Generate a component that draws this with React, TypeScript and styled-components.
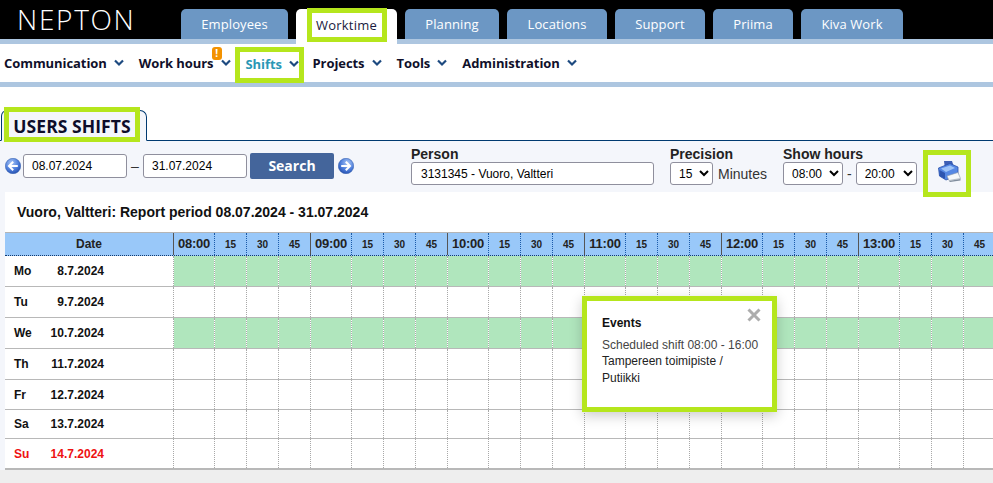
import { FC } from 'react'
import styled, { createGlobalStyle } from 'styled-components'

const HOURS = ['08:00', '09:00', '10:00', '11:00', '12:00', '13:00']
const QUARTERS = ['15', '30', '45']
const TABS = [
  { label: 'Employees', width: 107 },
  { label: 'Worktime', width: 101 },
  { label: 'Planning', width: 94 },
  { label: 'Locations', width: 100 },
  { label: 'Support', width: 90 },
  { label: 'Priima', width: 80 },
  { label: 'Kiva Work', width: 102 },
]
const MENU = ['Communication', 'Work hours', 'Shifts', 'Projects', 'Tools', 'Administration']

const DAYS = [
  { day: 'Mo', date: '8.7.2024', shift: true, height: 31 },
  { day: 'Tu', date: '9.7.2024', shift: false, height: 31 },
  { day: 'We', date: '10.7.2024', shift: true, height: 31 },
  { day: 'Th', date: '11.7.2024', shift: false, height: 31 },
  { day: 'Fr', date: '12.7.2024', shift: false, height: 30 },
  { day: 'Sa', date: '13.7.2024', shift: false, height: 29 },
  { day: 'Su', date: '14.7.2024', shift: false, height: 31, holiday: true },
]

const Chevron: FC = () => (
  <ChevronIcon viewBox="0 0 10 8">
    <path d="M1 1.5 L5 5.5 L9 1.5" fill="none" stroke="#1d4a80" strokeWidth="2.2" />
  </ChevronIcon>
)

const RoundArrow: FC<{ flip?: boolean }> = ({ flip }) => (
  <ArrowIcon viewBox="0 0 16 16" $flip={flip}>
    <defs>
      <radialGradient id="arrowFill" cx="0.4" cy="0.3" r="0.8">
        <stop offset="0" stopColor="#a9c6f5" />
        <stop offset="0.55" stopColor="#4f7fdc" />
        <stop offset="1" stopColor="#1c46a6" />
      </radialGradient>
    </defs>
    <circle cx="8" cy="8" r="7.7" fill="url(#arrowFill)" stroke="#2c58a8" strokeWidth="0.5" />
    <path d="M8.2 3.8 L4 8 L8.2 12.2 M4.4 8 H12.8" fill="none" stroke="#fff" strokeWidth="2" />
  </ArrowIcon>
)

const PrinterIcon: FC = () => (
  <PrinterSvg viewBox="0 0 23 23">
    <path d="M6 1 H14 L16 7 L7 9 Z" fill="#3e5fb4" />
    <path d="M0.5 8 L12 3.5 L20 7 L20 15 L8 20 L1.5 16 Z" fill="#5688e4" stroke="#2b52ab" strokeWidth="0.8" />
    <path d="M3 8.5 L12 5.5 L17 8 L8 12 Z" fill="#9fc4f7" />
    <path d="M1.5 10 L7 13 L7 19 L1.5 16 Z" fill="#2d55b0" />
    <path d="M9 16 L20 12.5 L22.5 18.5 L11 20.5 Z" fill="#f6f8fa" stroke="#8d99a8" strokeWidth="0.6" />
    <path d="M11 21 L22.5 19 L22.5 20.5 L12 22 Z" fill="#7f8c9c" />
  </PrinterSvg>
)

const App: FC = () => {
  return (
    <Page>
      <GlobalStyle />
      <TopBar>
        <Logo>NEPTON</Logo>
        <Tabs>
          {TABS.map((tab) =>
            tab.label === 'Worktime' ? (
              <ActiveTab key={tab.label} $width={tab.width}>
                <ActiveTabLabel>{tab.label}</ActiveTabLabel>
              </ActiveTab>
            ) : (
              <Tab key={tab.label} $width={tab.width}>
                {tab.label}
              </Tab>
            )
          )}
        </Tabs>
      </TopBar>

      <Menu>
        {MENU.map((item) =>
          item === 'Shifts' ? (
            <ActiveMenuItem key={item}>
              {item}
              <Chevron />
            </ActiveMenuItem>
          ) : (
            <MenuItem key={item}>
              {item}
              {item === 'Work hours' && <Badge>!</Badge>}
              <Chevron />
            </MenuItem>
          )
        )}
      </Menu>

      <TitleBar>
        <TitleTab>
          <TitleLabel>USERS SHIFTS</TitleLabel>
        </TitleTab>
      </TitleBar>

      <Filters>
        <DateGroup>
          <RoundArrow />
          <DateInput defaultValue="08.07.2024" />
          <DateDash>–</DateDash>
          <DateInput defaultValue="31.07.2024" />
          <SearchButton>Search</SearchButton>
          <RoundArrow flip />
        </DateGroup>
        <PersonField>
          <FieldLabel>Person</FieldLabel>
          <PersonInput defaultValue="3131345 - Vuoro, Valtteri" />
        </PersonField>
        <PrecisionField>
          <FieldLabel>Precision</FieldLabel>
          <FieldRow>
            <Select $width={43} defaultValue="15">
              <option>15</option>
            </Select>
            <Unit>Minutes</Unit>
          </FieldRow>
        </PrecisionField>
        <HoursField>
          <FieldLabel>Show hours</FieldLabel>
          <FieldRow>
            <Select $width={60} defaultValue="08:00">
              <option>08:00</option>
            </Select>
            <Dash>-</Dash>
            <Select $width={61} defaultValue="20:00">
              <option>20:00</option>
            </Select>
          </FieldRow>
        </HoursField>
        <PrintButton>
          <PrinterIcon />
        </PrintButton>
      </Filters>

      <Report>
        <ReportTitle>Vuoro, Valtteri: Report period 08.07.2024 - 31.07.2024</ReportTitle>
        <Schedule>
          <HeaderRow>
            <DateHeader>Date</DateHeader>
            {HOURS.map((hour) => (
              <HourGroup key={hour}>
                <HourHead>{hour}</HourHead>
                {QUARTERS.map((q) => (
                  <QuarterHead key={q}>{q}</QuarterHead>
                ))}
              </HourGroup>
            ))}
          </HeaderRow>
          {DAYS.map((d) => (
            <DayRow key={d.date} style={{ height: d.height }}>
              <DayCell $holiday={d.holiday}>
                <DayName>{d.day}</DayName>
                <DayDate>{d.date}</DayDate>
              </DayCell>
              <Slots>
                {HOURS.map((hour) => (
                  <HourGroup key={hour}>
                    <HourSlot $shift={d.shift} />
                    {QUARTERS.map((q) => (
                      <QuarterSlot key={q} $shift={d.shift} />
                    ))}
                  </HourGroup>
                ))}
              </Slots>
            </DayRow>
          ))}
          <Popup>
            <CloseMark>
              <svg width="14" height="14" viewBox="0 0 14 14">
                <path d="M1.5 1.5 L12.5 12.5 M12.5 1.5 L1.5 12.5" stroke="#adadad" strokeWidth="3" />
              </svg>
            </CloseMark>
            <PopupTitle>Events</PopupTitle>
            <PopupShift>Scheduled shift 08:00 - 16:00</PopupShift>
            <PopupPlace>Tampereen toimipiste /</PopupPlace>
            <PopupPlace>Putiikki</PopupPlace>
          </Popup>
        </Schedule>
      </Report>
      <Footer />
    </Page>
  )
}

export default App

const LIME = '#b5e61d'
const BAND = '#adc6e0'
const PANEL = '#f4f6fb'

const GlobalStyle = createGlobalStyle`
  html, body {
    margin: 0;
    padding: 0;
    background: #fff;
    overflow: hidden;
  }
  * {
    box-sizing: border-box;
  }
`

const Page = styled.div`
  width: 993px;
  height: 483px;
  overflow: hidden;
  background: #fff;
  font-family: 'Liberation Sans', Arial, sans-serif;
  color: #000;
`

const TopBar = styled.header`
  display: flex;
  align-items: flex-end;
  height: 44px;
  background: #000;
  border-bottom: 5px solid ${BAND};
`

const Logo = styled.div`
  align-self: flex-start;
  width: 181px;
  padding-left: 17px;
  font-family: 'Open Sans', sans-serif;
  font-size: 28px;
  line-height: 38px;
  font-weight: 300;
  letter-spacing: 1.7px;
  color: #fff;
`

const Tabs = styled.nav`
  display: flex;
  gap: 8px;
`

const Tab = styled.div<{ $width: number }>`
  display: flex;
  align-items: center;
  justify-content: center;
  width: ${({ $width }) => $width}px;
  height: 30px;
  padding-bottom: 1px;
  border-radius: 5px 5px 0 0;
  background: #6c97c4;
  color: #fff;
  font-family: 'Open Sans', sans-serif;
  font-size: 13px;
  letter-spacing: 0.1px;
`

const ActiveTab = styled.div<{ $width: number }>`
  position: relative;
  display: flex;
  justify-content: center;
  width: ${({ $width }) => $width}px;
  height: 35px;
  margin-bottom: -5px;
  border-radius: 5px 5px 0 0;
  background: #fff;
`

const ActiveTabLabel = styled.div`
  display: flex;
  align-items: center;
  justify-content: center;
  width: 80px;
  height: 34px;
  margin-top: -1px;
  border: 5px solid ${LIME};
  color: #1a1a40;
  font-family: 'Open Sans', sans-serif;
  font-size: 13px;
  letter-spacing: 0.2px;
`

const Menu = styled.nav`
  display: flex;
  align-items: flex-start;
  height: 43px;
  padding-left: 4px;
  border-bottom: 5px solid ${BAND};
  background: #fff;
`

const MenuItem = styled.div`
  position: relative;
  display: flex;
  align-items: center;
  gap: 7px;
  height: 38px;
  margin-right: 15px;
  color: #10102a;
  font-family: 'Open Sans', sans-serif;
  font-size: 13px;
  font-weight: 700;
  letter-spacing: -0.07px;
  white-space: nowrap;
`

const ActiveMenuItem = styled(MenuItem)`
  z-index: 1;
  width: 69px;
  height: 36px;
  margin: 3px 9px 0 -11px;
  padding: 0 0 2px 6px;
  border: 5px solid ${LIME};
  background: #fff;
  color: #2a97b5;
`

const ChevronIcon = styled.svg`
  width: 10px;
  height: 8px;
  flex: none;
`

const Badge = styled.span`
  position: absolute;
  top: 3px;
  left: 73px;
  width: 10px;
  height: 13px;
  border-radius: 3px;
  background: #f39200;
  color: #fff;
  font-size: 10px;
  line-height: 13px;
  text-align: center;
`

const TitleBar = styled.div`
  display: flex;
  align-items: flex-end;
  height: 54px;
  border-bottom: 1px solid #003a70;
  background: #fff;
`

const TitleTab = styled.div`
  position: relative;
  width: 146px;
  height: 31px;
  margin: 0 0 -1px 1px;
  border: 1px solid #003a70;
  border-bottom: 1px solid ${PANEL};
  border-radius: 6px 7px 0 0;
  background: ${PANEL};
`

const TitleLabel = styled.div`
  position: absolute;
  top: -4px;
  left: 2px;
  display: flex;
  align-items: center;
  justify-content: center;
  width: 136px;
  height: 35px;
  padding-top: 2px;
  border: 5px solid ${LIME};
  background: ${PANEL};
  color: #0d0d2a;
  font-family: 'Open Sans', sans-serif;
  font-size: 17.5px;
  font-weight: 700;
  letter-spacing: 0.07px;
  white-space: nowrap;
`

const Filters = styled.section`
  display: flex;
  align-items: flex-start;
  height: 51px;
  padding-left: 5px;
  background: ${PANEL};
`

const DateGroup = styled.div`
  display: flex;
  align-items: center;
  width: 406px;
  margin-top: 12px;
`

const ArrowIcon = styled.svg<{ $flip?: boolean }>`
  width: 16px;
  height: 16px;
  flex: none;
  margin-left: ${({ $flip }) => ($flip ? '4px' : '0')};
  margin-right: ${({ $flip }) => ($flip ? '0' : '2px')};
  transform: ${({ $flip }) => ($flip ? 'scaleX(-1)' : 'none')};
`

const DateInput = styled.input`
  width: 104px;
  height: 24px;
  padding: 0 8px;
  border: 1px solid #8f8f9d;
  border-radius: 3px;
  background: #fff;
  font-family: inherit;
  font-size: 12px;
  color: #000;
`

const DateDash = styled.span`
  width: 16px;
  font-size: 14px;
  text-align: center;
  color: #333;
`

const SearchButton = styled.button`
  width: 84px;
  height: 26px;
  margin-left: 3px;
  padding: 0 0 1px;
  border: none;
  border-radius: 2px;
  background: #44659b;
  color: #fff;
  font-family: 'Open Sans', sans-serif;
  font-size: 14px;
  font-weight: 700;
`

const Field = styled.div`
  display: flex;
  flex-direction: column;
  margin-top: 6px;
`

const PersonField = styled(Field)`
  width: 259px;
`

const PrecisionField = styled(Field)`
  width: 113px;
`

const HoursField = styled(Field)`
  width: 140px;
`

const FieldLabel = styled.label`
  height: 15px;
  font-size: 14px;
  line-height: 15px;
  font-weight: 700;
  color: #222;
`

const FieldRow = styled.div`
  display: flex;
  align-items: center;
`

const PersonInput = styled.input`
  width: 243px;
  height: 23px;
  padding: 0 9px;
  border: 1px solid #8f8f9d;
  border-radius: 3px;
  background: #fff;
  font-family: inherit;
  font-size: 12px;
  color: #000;
`

const Select = styled.select<{ $width: number }>`
  width: ${({ $width }) => $width}px;
  height: 23px;
  padding: 0 0 0 4px;
  border: 1px solid #8f8f9d;
  border-radius: 3px;
  background-color: #fff;
  font-family: inherit;
  font-size: 12px;
  color: #000;
`

const Unit = styled.span`
  margin-left: 5px;
  font-size: 14px;
  color: #333;
`

const Dash = styled.span`
  margin: 0 4px;
  font-size: 14px;
  color: #333;
`

const PrintButton = styled.div`
  position: relative;
  display: flex;
  align-items: center;
  justify-content: center;
  width: 48px;
  height: 47px;
  margin-top: 9px;
  border: 5px solid ${LIME};
  background: ${PANEL};
`

const PrinterSvg = styled.svg`
  width: 23px;
  height: 23px;
  margin: 0 0 4px 4px;
`

const Report = styled.section`
  height: 278px;
  padding-left: 5px;
  background: linear-gradient(to right, ${PANEL} 5px, #fff 5px);
`

const ReportTitle = styled.h2`
  height: 40px;
  margin: 0;
  padding: 12px 0 0 12px;
  font-size: 14px;
  line-height: 16px;
  font-weight: 700;
  color: #111;
`

const Schedule = styled.div`
  position: relative;
  border-top: 1px solid #b5b5b5;
`

const HeaderRow = styled.div`
  display: flex;
  height: 23px;
  border-bottom: 1px dotted #123a70;
  background: #99c8f9;
`

const DateHeader = styled.div`
  flex: none;
  width: 168px;
  font-size: 12px;
  font-weight: 700;
  line-height: 22px;
  text-align: center;
  color: #222;
`

const HourGroup = styled.div`
  display: flex;
  flex: none;
  width: 137px;
`

const HourHead = styled.div`
  flex: none;
  width: 41px;
  border-left: 1px solid #555;
  font-size: 13px;
  font-weight: 700;
  letter-spacing: -0.2px;
  line-height: 22px;
  text-align: center;
  color: #222;
`

const QuarterHead = styled.div`
  flex: none;
  width: 32px;
  border-left: 1px dotted #1a5aa8;
  font-size: 10px;
  font-weight: 700;
  line-height: 23px;
  text-align: center;
  color: #222;
`

const DayRow = styled.div`
  display: flex;
  border-bottom: 1px solid #b8b8b8;

  &:last-of-type {
    border-bottom-width: 2px;
  }
`

const DayCell = styled.div<{ $holiday?: boolean }>`
  display: flex;
  align-items: center;
  flex: none;
  width: 168px;
  padding-left: 9px;
  color: ${({ $holiday }) => ($holiday ? '#ee1111' : '#111')};
  font-size: 12px;
  font-weight: 700;
`

const DayName = styled.span`
  width: 30px;
`

const DayDate = styled.span`
  width: 60px;
  text-align: right;
`

const Slots = styled.div`
  display: flex;
  flex: 1;
`

const HourSlot = styled.div<{ $shift?: boolean }>`
  flex: none;
  width: 41px;
  border-left: 1px dotted #a8a8a8;
  background: ${({ $shift }) => ($shift ? '#b0e6bd' : '#fff')};
  background-clip: padding-box;
`

const QuarterSlot = styled(HourSlot)`
  width: 32px;
`

const Popup = styled.aside`
  position: absolute;
  top: 63px;
  left: 577px;
  width: 195px;
  height: 116px;
  padding: 14px 9px 0 15px;
  border: 5px solid ${LIME};
  background: #fff;
  box-shadow: 0 4px 12px rgba(0, 0, 0, 0.2);
  font-size: 12px;
  line-height: 16.5px;
`

const CloseMark = styled.div`
  position: absolute;
  top: 7px;
  right: 11px;
  height: 14px;
`

const PopupTitle = styled.div`
  margin-bottom: 5px;
  font-weight: 700;
  color: #111;
`

const PopupShift = styled.div`
  color: #444;
`

const PopupPlace = styled.div`
  color: #222;
`

const Footer = styled.footer`
  height: 13px;
  background: #eee;
`
